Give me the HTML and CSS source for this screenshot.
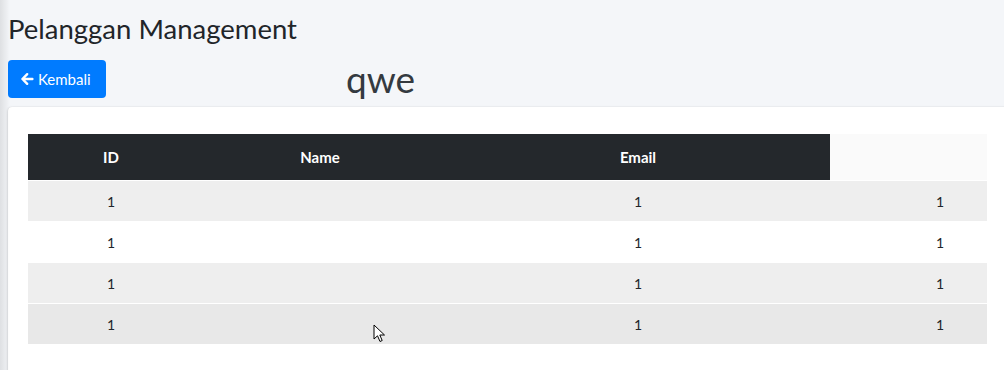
FILE: index.html
```html
<!DOCTYPE html>
<html>
<head>
<meta charset="utf-8">
<link rel="stylesheet" href="styles.css">
</head>
<body>
<div class="page">
  <div class="edge"></div>
  <div class="content">
    <h1 class="title">Pelanggan Management</h1>
    <div class="toolbar">
      <button class="btn-back">
        <svg class="arrow" width="14" height="14" viewBox="0 0 14 14"><path d="M7.2 2.2 L2.4 7 L7.2 11.8 M2.6 7 H12.4" fill="none" stroke="#fff" stroke-width="2.4" stroke-linecap="round" stroke-linejoin="round"/></svg>
        <span>Kembali</span>
      </button>
      <span class="big">qwe</span>
    </div>
    <div class="card">
      <table class="grid">
        <colgroup>
          <col class="c1"><col class="c2"><col class="c3"><col class="c4"><col class="c5">
        </colgroup>
        <thead>
          <tr><th class="dark">ID</th><th class="dark">Name</th><th class="dark">Email</th><th class="light"></th><th class="light"></th></tr>
        </thead>
        <tbody>
          <tr class="odd"><td>1</td><td></td><td>1</td><td></td><td>1</td></tr>
          <tr class="even"><td>1</td><td></td><td>1</td><td></td><td>1</td></tr>
          <tr class="odd"><td>1</td><td></td><td>1</td><td></td><td>1</td></tr>
          <tr class="hover"><td>1</td><td></td><td>1</td><td></td><td>1</td></tr>
        </tbody>
      </table>
    </div>
  </div>
  <svg class="cursor" width="14" height="20" viewBox="0 0 14 20"><path d="M1 1 L1 15 L4.5 11.8 L7 17.5 L9.2 16.5 L6.8 11 L11.5 11 Z" fill="#fff" stroke="#000" stroke-width="1" stroke-linejoin="round"/></svg>
</div>
</body>
</html>
```
FILE: styles.css
```css
html, body {
  margin: 0;
  padding: 0;
}
body {
  background: #f4f6f9;
  font-family: Lato, "Liberation Sans", sans-serif;
  color: #212529;
  overflow: hidden;
}
.page {
  position: relative;
  width: 1004px;
  height: 370px;
  overflow: hidden;
}
.edge {
  position: absolute;
  left: 0;
  top: 0;
  bottom: 0;
  width: 10px;
  background: linear-gradient(to right, rgba(0,0,0,0.09), rgba(0,0,0,0));
  z-index: 2;
  pointer-events: none;
}
.content {
  padding: 12px 0 0 8px;
}
.title {
  margin: 0;
  font-size: 27.5px;
  font-weight: 400;
  line-height: 34px;
  color: #212529;
}
.toolbar {
  display: flex;
  align-items: flex-end;
  margin-top: 14px;
  height: 38px;
}
.btn-back {
  display: flex;
  align-items: center;
  gap: 4px;
  height: 38px;
  width: 98px;
  padding: 0 0 0 12px;
  border: none;
  border-radius: 4px;
  background: #007bff;
  color: #fff;
  font-family: Lato, "Liberation Sans", sans-serif;
  font-size: 15px;
}
.big {
  margin-left: 240px;
  font-size: 37px;
  line-height: 40px;
  color: #343a40;
  position: relative;
  top: 1px;
}
.card {
  margin-top: 9px;
  width: 999px;
  background: #fff;
  border-radius: 4px 0 0 4px;
  box-shadow: 0 0 1px rgba(0,0,0,.125), 0 1px 3px rgba(0,0,0,.2);
  padding: 27px 0 40px 20px;
}
.grid {
  border-collapse: collapse;
  table-layout: fixed;
  width: 959px;
  font-size: 14px;
}
.c1 { width: 166px; }
.c2 { width: 252px; }
.c3 { width: 384px; }
.c4 { width: 63px; }
.c5 { width: 94px; }
th {
  height: 46px;
  padding: 0;
  font-size: 15px;
  font-weight: 700;
  text-align: center;
  vertical-align: middle;
}
th.dark {
  background: #24282c;
  color: #fff;
}
th.light {
  background: #fafafa;
}
td {
  height: 40px;
  padding: 0;
  text-align: center;
  vertical-align: middle;
  border-top: 1px solid #fff;
  font-size: 14px;
}
tr.odd td { background: #eeeeee; }
tr.even td { background: #ffffff; }
tr.hover td { background: #e8e8e8; }
.cursor {
  position: absolute;
  left: 373px;
  top: 324px;
  z-index: 3;
}
```
